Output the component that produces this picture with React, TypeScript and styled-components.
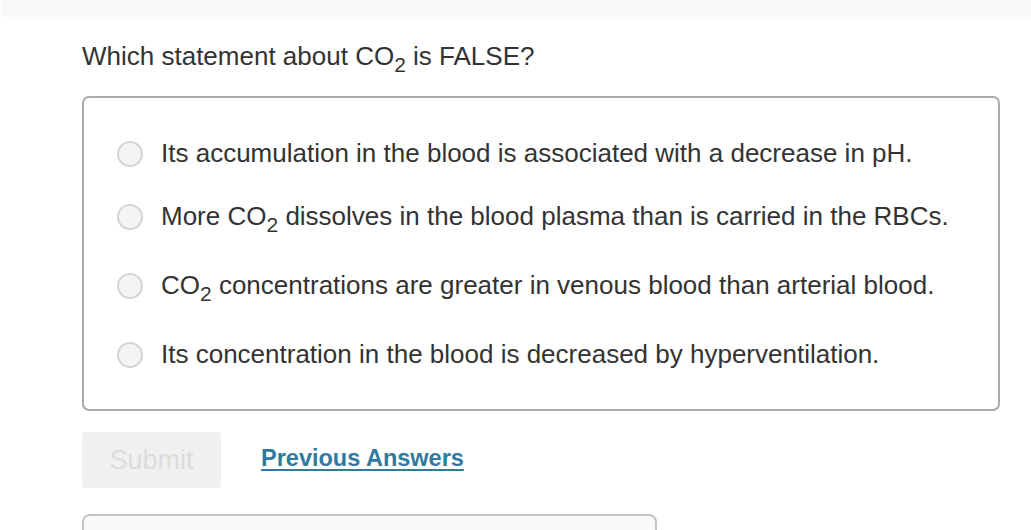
import React from "react";
import styled, { createGlobalStyle } from "styled-components";

const Global = createGlobalStyle`
  html, body { margin: 0; padding: 0; background: #fff; }
  body { font-family: "Liberation Sans", Arial, Helvetica, sans-serif; color: #333; }
`;

const TopBar = styled.div`
  height: 17px;
  margin-left: 1px;
  background: #f9f9f9;
`;

const Content = styled.div`
  padding-left: 82px;
  width: 918px;
`;

const Question = styled.div`
  margin-top: 24px;
  font-size: 26px;
  line-height: 30px;
  color: #333;
`;

const Sub = styled.sub`
  font-size: 21px;
  line-height: 0;
  vertical-align: -7px;
`;

const OptionsBox = styled.div`
  margin-top: 25px;
  border: 2px solid #aaa;
  border-radius: 7px;
  padding: 40px 0 40px 33px;
  display: flex;
  flex-direction: column;
  gap: 33px;
`;

const Option = styled.label<{ $sub?: boolean }>`
  display: flex;
  align-items: flex-start;
  gap: 18px;
  font-size: 26px;
  line-height: 30px;
  padding-bottom: ${(p) => (p.$sub ? "6px" : "0")};
  color: #333;
`;

const Radio = styled.span`
  flex: none;
  width: 22px;
  height: 22px;
  margin-top: 3px;
  border-radius: 50%;
  border: 2px solid #d4d4d4;
  background: #f4f4f4;
`;

const Actions = styled.div`
  margin-top: 21px;
  display: flex;
  align-items: center;
  gap: 40px;
`;

const SubmitButton = styled.button`
  width: 139px;
  height: 56px;
  border: none;
  border-radius: 4px;
  background: #f0f0f0;
  color: #dcdcdc;
  font-family: "Liberation Sans", Arial, sans-serif;
  font-size: 27px;
  padding: 0;
`;

const PrevLink = styled.a`
  font-size: 23.5px;
  font-weight: bold;
  color: #2f7aa0;
  text-decoration: underline;
  text-underline-offset: 3px;
  text-decoration-thickness: 2px;
  margin-top: -3px;
`;

const BottomBox = styled.div`
  margin-top: 26px;
  width: 571px;
  height: 40px;
  border: 2px solid #c4c4c4;
  border-radius: 8px;
  background: #fafafa;
`;

const options: { parts: React.ReactNode; sub?: boolean }[] = [
  { parts: <>Its accumulation in the blood is associated with a decrease in pH.</> },
  {
    parts: (
      <>
        More CO<Sub>2</Sub> dissolves in the blood plasma than is carried in the RBCs.
      </>
    ),
    sub: true,
  },
  {
    parts: (
      <>
        CO<Sub>2</Sub> concentrations are greater in venous blood than arterial blood.
      </>
    ),
    sub: true,
  },
  { parts: <>Its concentration in the blood is decreased by hyperventilation.</> },
];

export default function App() {
  return (
    <>
      <Global />
      <TopBar />
      <Content>
        <Question>
          Which statement about CO<Sub>2</Sub> is FALSE?
        </Question>
        <OptionsBox>
          {options.map((o, i) => (
            <Option key={i} $sub={o.sub}>
              <Radio />
              <span>{o.parts}</span>
            </Option>
          ))}
        </OptionsBox>
        <Actions>
          <SubmitButton disabled>Submit</SubmitButton>
          <PrevLink href="#">Previous Answers</PrevLink>
        </Actions>
        <BottomBox />
      </Content>
    </>
  );
}
